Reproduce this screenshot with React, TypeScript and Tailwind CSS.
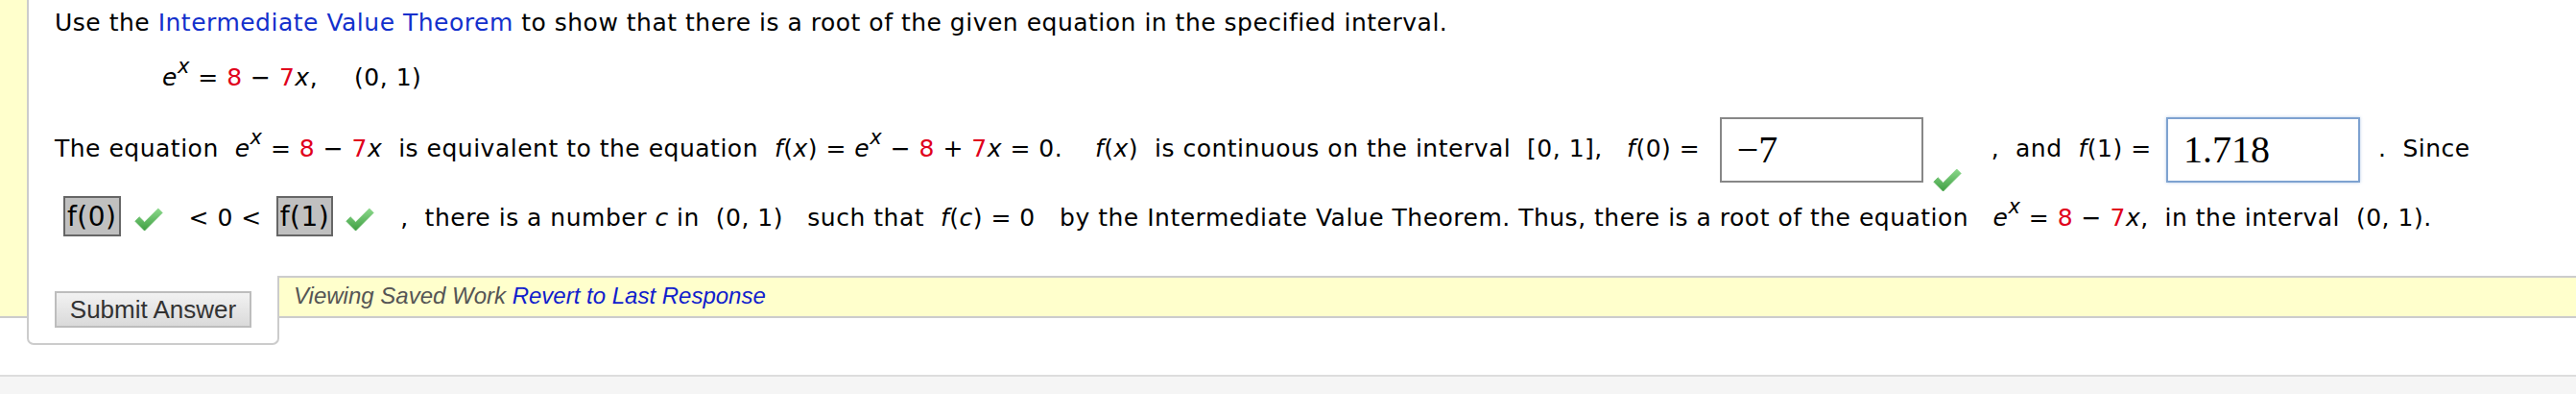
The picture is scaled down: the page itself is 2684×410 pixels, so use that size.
import React from 'react';

// small italic pieces for the math
const I = ({ children }: { children: React.ReactNode }) => <span className="italic">{children}</span>;
const Red = ({ children }: { children: React.ReactNode }) => <span className="text-[#e0001b]">{children}</span>;
const Ex = () => (
    <>
        <span className="italic">e</span>
        <span className="italic text-[21px] leading-[0] align-[13px]">x</span>
    </>
);

function Check({ className }: { className?: string }) {
    return (
        <svg viewBox="0 0 30 25" className={className} aria-hidden="true">
            <defs>
                <linearGradient id="chk" x1="0" y1="0" x2="0" y2="1">
                    <stop offset="0" stopColor="#8bd88b" />
                    <stop offset="1" stopColor="#3f9f42" />
                </linearGradient>
            </defs>
            <path
                d="M0.8 14.2 L5.2 9.8 L10.6 15.2 L24.8 1 L29.2 5.4 L10.6 24 Z"
                fill="url(#chk)"
                stroke="url(#chk)"
                strokeWidth="0.8"
                strokeLinejoin="round"
            />
        </svg>
    );
}

function AnswerBox({ value, className }: { value: string; className: string }) {
    return (
        <span
            className={`inline-flex items-center align-middle h-[68px] bg-white pl-[16px] font-['Liberation_Serif',serif] text-[40px] tracking-normal not-italic text-black border-2 ${className}`}
        >
            {value}
        </span>
    );
}

function GrayBox({ children }: { children: React.ReactNode }) {
    return (
        <span className="inline-block border-2 border-[#666] bg-[#c0c0c0] px-[2px] pt-[6px] pb-[4px] text-[28px] leading-none">
            {children}
        </span>
    );
}

export default function App() {
    return (
        <div className="w-[2684px] h-[410px] bg-white overflow-hidden">
            <div className="bg-[#ffffcc] border-b-2 border-[#ccc] pl-[28px]">
                {/* question body */}
                <div className="h-[287px] bg-white border-l-2 border-[#ccc] pl-[27px] pt-[9px] font-['DejaVu_Sans',Verdana,sans-serif] text-[25px] leading-[30px] tracking-[0.5px] text-black whitespace-pre">
                    <div className="h-[30px]">
                        {'Use the '}
                        <span className="text-[#1330cc]">Intermediate Value Theorem</span>
                        {' to show that there is a root of the given equation in the specified interval.'}
                    </div>

                    <div className="h-[30px] mt-[27px] pl-[112px]">
                        <Ex />
                        {' = '}
                        <Red>8</Red>
                        {' − '}
                        <Red>7</Red>
                        <I>x</I>
                        {','}
                        <span className="ml-[38px]">(0, 1)</span>
                    </div>

                    <div className="h-[82px] mt-[26px]">
                        {'The equation  '}
                        <Ex />
                        {' = '}
                        <Red>8</Red>
                        {' − '}
                        <Red>7</Red>
                        <I>x</I>
                        {'  is equivalent to the equation  '}
                        <I>f</I>
                        {'('}
                        <I>x</I>
                        {') = '}
                        <Ex />
                        {' − '}
                        <Red>8</Red>
                        {' + '}
                        <Red>7</Red>
                        <I>x</I>
                        {' = 0.    '}
                        <I>f</I>
                        {'('}
                        <I>x</I>
                        {')  is continuous on the interval  [0, 1],   '}
                        <I>f</I>
                        {'(0) = '}
                        <AnswerBox value="−7" className="w-[212px] ml-[12px] border-[#878787]" />
                        <Check className="inline-block w-[30px] h-[25px] ml-[10px] align-[-37px]" />
                        <span className="ml-[31px]">{',  and  '}</span>
                        <I>f</I>
                        {'(1) = '}
                        <AnswerBox
                            value="1.718"
                            className="w-[202px] ml-[7px] border-[#7ea2d0] shadow-[0_0_3px_rgba(90,140,205,0.45)]"
                        />
                        <span className="ml-[19px]">{'.  Since'}</span>
                    </div>

                    <div className="h-[30px] pl-[9px]">
                        <GrayBox>f(0)</GrayBox>
                        <Check className="inline-block w-[30px] h-[25px] ml-[14px] align-[-6px]" />
                        <span className="ml-[27px]">{'< 0 <'}</span>
                        <span className="ml-[15px]">
                            <GrayBox>f(1)</GrayBox>
                        </span>
                        <Check className="inline-block w-[30px] h-[25px] ml-[13px] align-[-6px]" />
                        <span className="ml-[27px]">{',  there is a number '}</span>
                        <I>c</I>
                        {' in  (0, 1)   such that  '}
                        <I>f</I>
                        {'('}
                        <I>c</I>
                        {') = 0   by the Intermediate Value Theorem. Thus, there is a root of the equation   '}
                        <Ex />
                        {' = '}
                        <Red>8</Red>
                        {' − '}
                        <Red>7</Red>
                        <I>x</I>
                        {',  in the interval  (0, 1).'}
                    </div>
                </div>

                {/* submit tab + saved work notice */}
                <div className="flex h-[42px]">
                    <div className="w-[263px] h-[72px] shrink-0 bg-white border-x-2 border-b-2 border-[#ccc] rounded-b-[7px] pl-[27px] pt-[16px]">
                        <button className="h-[38px] w-[205px] border-2 border-[#bdbdbd] bg-linear-to-b from-[#f2f2f2] to-[#dadada] font-['Liberation_Sans',Arial,sans-serif] text-[26px] leading-[34px] text-[#333]">
                            Submit Answer
                        </button>
                    </div>
                    <div className="flex-1 border-t-2 border-[#ccc] pl-[15px] pt-[5px] font-['Liberation_Sans',Arial,sans-serif] text-[24px] leading-[28px] italic text-[#555]">
                        Viewing Saved Work <span className="text-[#1020cc]">Revert to Last Response</span>
                    </div>
                </div>
            </div>

            <div className="h-[59px]" />
            <div className="h-[20px] border-t-2 border-[#ddd] bg-[#f5f5f5]" />
        </div>
    );
}
